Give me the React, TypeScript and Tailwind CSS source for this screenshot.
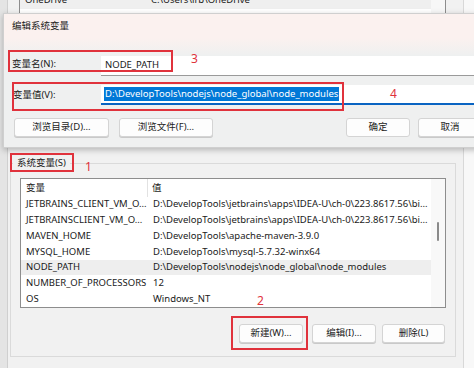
import React from "react";

const rows: [string, string, boolean?][] = [
  ["JETBRAINS_CLIENT_VM_O...", "D:\\DevelopTools\\jetbrains\\apps\\IDEA-U\\ch-0\\223.8617.56\\bi..."],
  ["JETBRAINSCLIENT_VM_O...", "D:\\DevelopTools\\jetbrains\\apps\\IDEA-U\\ch-0\\223.8617.56\\bi..."],
  ["MAVEN_HOME", "D:\\DevelopTools\\apache-maven-3.9.0"],
  ["MYSQL_HOME", "D:\\DevelopTools\\mysql-5.7.32-winx64"],
  ["NODE_PATH", "D:\\DevelopTools\\nodejs\\node_global\\node_modules", true],
  ["NUMBER_OF_PROCESSORS", "12"],
  ["OS", "Windows_NT"],
];

function Btn({ children, className = "" }: { children: React.ReactNode; className?: string }) {
  return (
    <div
      className={
        "h-[19px] flex items-center justify-center rounded-[3px] border border-[#d4d4d4] bg-[#fdfdfd] text-[#1b1b1b] shadow-[0_1px_0_#c9c9c9] " +
        className
      }
    >
      {children}
    </div>
  );
}

export default function App() {
  return (
    <div className="relative w-[474px] h-[368px] overflow-hidden bg-[#ececec] text-[9.5px] text-[#1a1a1a] font-['Noto_Sans','Noto_Sans_CJK_SC',sans-serif]">
      <div className="flex h-full">
        {/* desktop strip */}
        <div className="w-[8px] h-full bg-[#e4e4e4] border-r border-[#cfcfcf]" />
        {/* parent window */}
        <div className="w-[455px] h-full bg-[#f1f1f1] flex flex-col">
          {/* user variable list tail (mostly hidden) */}
          <div className="h-[154px] pl-[11px] pr-[17px]">
            <div className="h-[40px] -mt-[8px] bg-white border border-[#8d8d8d] border-t-0 flex">
              <div className="flex-1 flex flex-col">
                <div className="h-[17px] bg-[#efefef] flex items-center">
                  <span className="pl-[5px] w-[131px]">OneDrive</span>
                  <span>C:\Users\lrb\OneDrive</span>
                </div>
                <div className="h-[16px] flex items-center">
                  <span className="pl-[5px] w-[131px]">OneDriveConsumer</span>
                  <span>C:\Users\lrb\OneDrive</span>
                </div>
              </div>
              <div className="w-[14px] bg-[#f7f7f7]" />
            </div>
          </div>
          {/* system variables group */}
          <fieldset className="ml-[2px] w-[446px] border border-[#dadada] px-[9px] pt-[6px] pb-[13px]">
            <legend className="-ml-[7px] px-[4px] h-[18px] leading-[18px] text-[#1a1a1a]">系统变量(S)</legend>
            <div className="h-[130px] bg-white border border-[#8d8d8d] flex">
              <div className="flex-1 flex flex-col">
                <div className="h-[18px] flex items-center">
                  <div className="w-[127px] h-full flex items-center pl-[5px] border-r border-[#e2e2e2]">变量</div>
                  <div className="pl-[4px]">值</div>
                </div>
                {rows.map(([k, v, sel]) => (
                  <div key={k} className={"h-[16px] flex items-center " + (sel ? "bg-[#eeeeee]" : "")}>
                    <div className="w-[127px] pl-[5px] whitespace-nowrap overflow-hidden">{k}</div>
                    <div className="pl-[5px] whitespace-nowrap">{v}</div>
                  </div>
                ))}
              </div>
              <div className="w-[14px] bg-[#f8f8f8] flex justify-center pt-[43px]">
                <div className="w-[2px] h-[19px] rounded-full bg-[#8a8a8a]" />
              </div>
            </div>
            <div className="flex justify-end mt-[16px] pr-[1px]">
              <Btn className="w-[64px]">新建(W)...</Btn>
              <Btn className="w-[64px] ml-[9px]">编辑(I)...</Btn>
              <Btn className="w-[63px] ml-[6px]">删除(L)</Btn>
            </div>
          </fieldset>
        </div>
        <div className="flex-1 h-full bg-[#f8f8f8] border-l border-[#d8d8d8]" />
      </div>

      {/* edit dialog window */}
      <div className="absolute left-[3px] top-[13px] w-[492px] h-[135px] border border-[#cfcfcf] bg-[#eff0f0] shadow-[0_2px_6px_rgba(0,0,0,0.25)] flex flex-col">
        <div className="h-[24px] pl-[8px] flex items-center bg-[#fbf1ef]">编辑系统变量</div>
        <div className="h-[18px] bg-gradient-to-b from-[#fbf1ef] to-[#eef0f0]" />
        <div className="flex items-center h-[20px] pl-[8px] pr-[12px]">
          <div className="w-[89px] -mt-[3px]">变量名(N):</div>
          <div className="flex-1 h-full bg-white border-b border-[#9a9a9a] flex items-center pl-[4px]">NODE_PATH</div>
        </div>
        <div className="flex items-center h-[20px] mt-[9px] pl-[9px] pr-[12px]">
          <div className="w-[88px]">变量值(V):</div>
          <div className="flex-1 h-full bg-white border-b-2 border-[#0a64c2] flex items-center pl-[3px]">
            <span className="bg-[#0078d7] text-white leading-[14px] h-[14px] px-[1px]">
              D:\DevelopTools\nodejs\node_global\node_modules
            </span>
          </div>
        </div>
        <div className="flex items-center mt-[13px] pl-[10px] pr-[12px]">
          <Btn className="w-[95px]">浏览目录(D)...</Btn>
          <Btn className="w-[94px] ml-[10px]">浏览文件(F)...</Btn>
          <Btn className="w-[64px] ml-auto border-[#5f9fd8] shadow-none">确定</Btn>
          <Btn className="w-[64px] ml-[8px]">取消</Btn>
        </div>
      </div>

      {/* annotations */}
      <div className="absolute left-[8px] top-[50px] w-[165px] h-[22px] border-2 border-[#e0323c]" />
      <div className="absolute left-[191px] top-[52px] text-[12px] leading-[14px] text-[#e0323c]">3</div>
      <div className="absolute left-[12px] top-[82px] w-[332px] h-[29px] border-2 border-[#e0323c]" />
      <div className="absolute left-[390px] top-[87px] text-[12px] leading-[14px] text-[#e0323c]">4</div>
      <div className="absolute left-[10px] top-[153px] w-[64px] h-[19px] border-2 border-[#e0323c]" />
      <div className="absolute left-[85px] top-[160px] text-[12px] leading-[14px] text-[#e0323c]">1</div>
      <div className="absolute left-[231px] top-[316px] w-[77px] h-[34px] border-2 border-[#e0323c]" />
      <div className="absolute left-[257px] top-[294px] text-[12px] leading-[14px] text-[#e0323c]">2</div>
    </div>
  );
}
